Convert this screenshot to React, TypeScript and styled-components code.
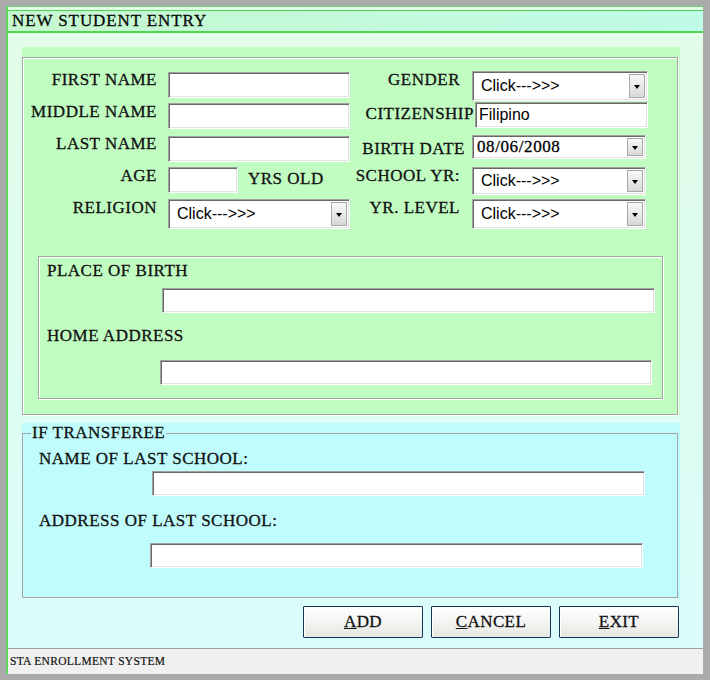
import React from 'react';
import styled, { createGlobalStyle } from 'styled-components';

const GlobalStyle = createGlobalStyle`
  html, body {
    margin: 0;
    padding: 0;
  }
  body {
    background: #ababab;
    font-family: "Liberation Serif", "Times New Roman", serif;
    color: #111;
  }
`;

const Window = styled.div`
  width: 710px;
  height: 680px;
  box-sizing: border-box;
  padding: 6px 7px 7px 6px;
  background: #ababab;
`;

const Inner = styled.div`
  height: 100%;
  display: flex;
  flex-direction: column;
  border-top: 1px solid #6ad86a;
  border-left: 2px solid #5cd65c;
  background: linear-gradient(180deg, #e2fde8 0%, #ddfdf0 55%, #dafefe 100%);
`;

const TitleBar = styled.div`
  margin-top: 3px;
  height: 20px;
  padding-left: 4px;
  border-top: 1px solid #52d452;
  border-bottom: 2px solid #52d452;
  background: linear-gradient(90deg, #c6f8cf 0%, #bffbe6 100%);
  font-size: 17px;
  line-height: 20px;
  letter-spacing: 0.9px;
  color: #0a0a0a;
  -webkit-text-stroke: 0.3px #0a0a0a;
`;

const Body = styled.div`
  flex: 1;
  display: flex;
  flex-direction: column;
  padding: 14px 23px 0 14px;
`;

const GroupFill = styled.div<{ $bg: string; $top: number; $mt?: number }>`
  background: ${(p) => p.$bg};
  padding: ${(p) => p.$top}px 2px 0 0;
  margin-top: ${(p) => p.$mt ?? 0}px;
`;

const EtchedFrame = styled.div`
  border: 1px solid #a3a3a3;
  box-shadow: inset 1px 1px 0 #ffffff, 1px 1px 0 #ffffff;
`;

const MainFrame = styled(EtchedFrame)`
  padding: 13px 0 15px 0;
`;

const FormGrid = styled.div`
  display: grid;
  grid-template-columns: 145px 182px 122px 176px;
  grid-template-rows: repeat(5, 28px);
  row-gap: 4px;
`;

const captionText = `
  font-size: 17px;
  line-height: 20px;
  letter-spacing: 0.5px;
  white-space: nowrap;
  -webkit-text-stroke: 0.3px #111;
`;

const Label = styled.div<{ $pr: number; $drop?: number; $pull?: number }>`
  ${captionText}
  align-self: start;
  text-align: right;
  padding-right: ${(p) => p.$pr}px;
  margin-top: ${(p) => (p.$drop ?? 0) - 1}px;
  margin-right: ${(p) => -(p.$pull ?? 0)}px;
`;

const Cell = styled.div`
  display: flex;
  align-items: flex-start;
`;

const sunken = `
  border: 1px solid;
  border-color: #a0a0a0 #ffffff #ffffff #a0a0a0;
  box-shadow: inset 1px 1px 0 #696969, inset -1px -1px 0 #e3e3e3;
  background: #ffffff;
  box-sizing: border-box;
`;

const TextBox = styled.input<{ $w: number; $h: number; $ml?: number; $mt?: number }>`
  ${sunken}
  display: block;
  width: ${(p) => p.$w}px;
  height: ${(p) => p.$h}px;
  margin: ${(p) => p.$mt ?? 0}px 0 0 ${(p) => p.$ml ?? 0}px;
  padding: 0 3px;
  font-family: "Liberation Sans", Arial, sans-serif;
  font-size: 16px;
  color: #000;
  outline: none;
`;

const Unit = styled.span`
  ${captionText}
  margin: 2px 0 0 10px;
`;

const Combo = styled.div<{ $w: number; $h: number }>`
  ${sunken}
  display: flex;
  width: ${(p) => p.$w}px;
  height: ${(p) => p.$h}px;
  padding: 1px;
`;

const ComboText = styled.div<{ $pl: number; $serif?: boolean }>`
  flex: 1;
  display: flex;
  align-items: center;
  padding-left: ${(p) => p.$pl}px;
  font-family: ${(p) =>
    p.$serif ? '"Liberation Serif", "Times New Roman", serif' : '"Liberation Sans", Arial, sans-serif'};
  font-size: ${(p) => (p.$serif ? 17 : 16)}px;
  letter-spacing: ${(p) => (p.$serif ? 0.6 : 0)}px;
  -webkit-text-stroke: ${(p) => (p.$serif ? '0.3px #000' : '0')};
  color: #000;
`;

const DropButton = styled.div`
  width: 14px;
  margin: 1px;
  border: 1px solid #a8a8a8;
  background: linear-gradient(180deg, #f8f8f8 0%, #e6e6e6 60%, #d8d8d8 100%);
  display: flex;
  align-items: center;
  justify-content: center;

  &::after {
    content: '';
    margin-top: 2px;
    border-left: 3.5px solid transparent;
    border-right: 3.5px solid transparent;
    border-top: 4px solid #000;
  }
`;

const PlaceBox = styled(EtchedFrame)`
  margin: 29px 14px 0 15px;
  padding: 4px 7px 13px 8px;
`;

const FieldLabel = styled.div<{ $mt: number }>`
  ${captionText}
  margin-top: ${(p) => p.$mt}px;
`;

const TransferSet = styled.fieldset`
  margin: 0;
  padding: 0 0 29px 0;
  min-width: 0;
  border: 1px solid #a3a3a3;
`;

const Legend = styled.legend`
  ${captionText}
  margin-left: 8px;
  padding: 0 1px;
`;

const TransferFields = styled.div`
  padding-left: 16px;
`;

const ButtonRow = styled.div`
  display: flex;
  justify-content: flex-end;
  gap: 8px;
  margin-top: 8px;
  padding-right: 1px;
`;

const ActionButton = styled.button`
  width: 120px;
  height: 32px;
  padding: 0;
  border: 1px solid #14355c;
  border-radius: 1px;
  background: linear-gradient(180deg, #ffffff 0%, #f4f4f2 50%, #e6e6e2 100%);
  box-shadow: inset 1px 1px 0 #ffffff;
  font-family: "Liberation Serif", "Times New Roman", serif;
  font-size: 17px;
  letter-spacing: 0.4px;
  color: #111;
  -webkit-text-stroke: 0.3px #111;
  cursor: pointer;
`;

const StatusBar = styled.div`
  height: 25px;
  border-top: 1px solid #a0a0a0;
  background: #f0f0f0;
  padding-left: 2px;
  font-size: 11.5px;
  line-height: 25px;
  letter-spacing: 0.3px;
  color: #111;
  -webkit-text-stroke: 0.2px #111;
`;

const Select: React.FC<{ w: number; h: number; value: string; pl?: number; serif?: boolean }> = ({
  w,
  h,
  value,
  pl = 7,
  serif,
}) => (
  <Combo $w={w} $h={h}>
    <ComboText $pl={pl} $serif={serif}>
      {value}
    </ComboText>
    <DropButton />
  </Combo>
);

const App: React.FC = () => {
  return (
    <>
      <GlobalStyle />
      <Window>
        <Inner>
          <TitleBar>NEW STUDENT ENTRY</TitleBar>
          <Body>
            <GroupFill $bg="#c1fcc1" $top={10}>
              <MainFrame>
                <FormGrid>
                  <Label $pr={11}>FIRST NAME</Label>
                  <Cell>
                    <TextBox $w={182} $h={26} $mt={1} readOnly />
                  </Cell>
                  <Label $pr={12}>GENDER</Label>
                  <Cell>
                    <Select w={176} h={30} value="Click--->>>" />
                  </Cell>

                  <Label $pr={11}>MIDDLE NAME</Label>
                  <Cell>
                    <TextBox $w={182} $h={26} readOnly />
                  </Cell>
                  <Label $pr={12} $drop={2} $pull={14}>
                    CITIZENSHIP
                  </Label>
                  <Cell>
                    <TextBox $w={173} $h={26} $ml={3} $mt={-1} defaultValue="Filipino" readOnly />
                  </Cell>

                  <Label $pr={11}>LAST NAME</Label>
                  <Cell>
                    <TextBox $w={182} $h={26} $mt={1} readOnly />
                  </Cell>
                  <Label $pr={12} $drop={5} $pull={5}>
                    BIRTH DATE
                  </Label>
                  <Cell>
                    <Select w={174} h={24} value="08/06/2008" pl={3} serif />
                  </Cell>

                  <Label $pr={11}>AGE</Label>
                  <Cell>
                    <TextBox $w={70} $h={26} readOnly />
                    <Unit>YRS OLD</Unit>
                  </Cell>
                  <Label $pr={12}>SCHOOL YR:</Label>
                  <Cell>
                    <Select w={174} h={28} value="Click--->>>" />
                  </Cell>

                  <Label $pr={11}>RELIGION</Label>
                  <Cell>
                    <Select w={182} h={30} value="Click--->>>" />
                  </Cell>
                  <Label $pr={12}>YR. LEVEL</Label>
                  <Cell>
                    <Select w={174} h={30} value="Click--->>>" />
                  </Cell>
                </FormGrid>

                <PlaceBox>
                  <FieldLabel $mt={0}>PLACE OF BIRTH</FieldLabel>
                  <TextBox $w={493} $h={25} $ml={115} $mt={7} readOnly />
                  <FieldLabel $mt={13}>HOME ADDRESS</FieldLabel>
                  <TextBox $w={492} $h={25} $ml={113} $mt={14} readOnly />
                </PlaceBox>
              </MainFrame>
            </GroupFill>

            <GroupFill $bg="#c0fcfc" $top={0} $mt={8}>
              <TransferSet>
                <Legend>IF TRANSFEREE</Legend>
                <TransferFields>
                  <FieldLabel $mt={6}>NAME OF LAST SCHOOL:</FieldLabel>
                  <TextBox $w={493} $h={25} $ml={113} $mt={2} readOnly />
                  <FieldLabel $mt={15}>ADDRESS OF LAST SCHOOL:</FieldLabel>
                  <TextBox $w={493} $h={25} $ml={111} $mt={12} readOnly />
                </TransferFields>
              </TransferSet>
            </GroupFill>

            <ButtonRow>
              <ActionButton>
                <u>A</u>DD
              </ActionButton>
              <ActionButton>
                <u>C</u>ANCEL
              </ActionButton>
              <ActionButton>
                <u>E</u>XIT
              </ActionButton>
            </ButtonRow>
          </Body>
          <StatusBar>STA ENROLLMENT SYSTEM</StatusBar>
        </Inner>
      </Window>
    </>
  );
};

export default App;
